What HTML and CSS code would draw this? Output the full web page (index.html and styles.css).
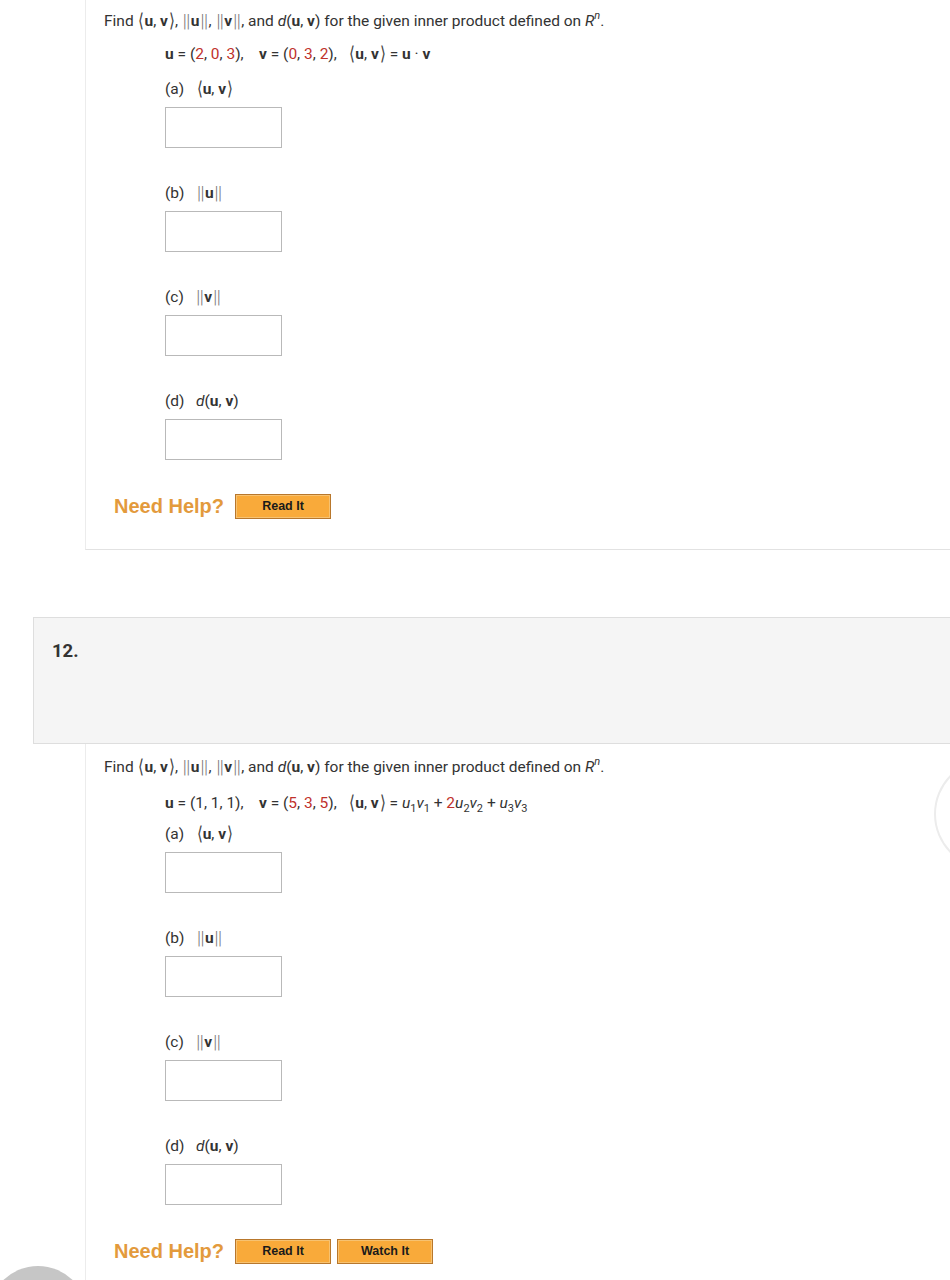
FILE: index.html
```html
<!DOCTYPE html>
<html>
<head>
<meta charset="utf-8">
<link rel="stylesheet" href="styles.css">
</head>
<body>
<div class="page">
  <section class="panel panel-first">
    <p class="intro">Find <span class="ip"><span class="br">⟨</span><b>u</b>, <b>v</b><span class="br">⟩</span></span>, <span class="nm"><span class="bar">||</span><b>u</b><span class="bar">||</span></span>, <span class="nm"><span class="bar">||</span><b>v</b><span class="bar">||</span></span>, and <i>d</i>(<b>u</b>, <b>v</b>) for the given inner product defined on <i>R</i><sup><i>n</i></sup>.</p>
    <p class="given"><b>u</b> = (<span class="red">2</span>, <span class="red">0</span>, <span class="red">3</span>), &nbsp;&nbsp; <b>v</b> = (<span class="red">0</span>, <span class="red">3</span>, <span class="red">2</span>), &nbsp;&nbsp;<span class="ip"><span class="br">⟨</span><b>u</b>, <b>v</b><span class="br">⟩</span></span> = <b>u</b> · <b>v</b></p>
    <div class="part"><div class="label">(a) &nbsp; <span class="ip"><span class="br">⟨</span><b>u</b>, <b>v</b><span class="br">⟩</span></span></div><div class="answer"></div></div>
    <div class="part"><div class="label">(b) &nbsp; <span class="nm"><span class="bar">||</span><b>u</b><span class="bar">||</span></span></div><div class="answer"></div></div>
    <div class="part"><div class="label">(c) &nbsp; <span class="nm"><span class="bar">||</span><b>v</b><span class="bar">||</span></span></div><div class="answer"></div></div>
    <div class="part"><div class="label">(d) &nbsp; <i>d</i>(<b>u</b>, <b>v</b>)</div><div class="answer"></div></div>
    <div class="help"><span class="help-text">Need Help?</span><span class="btn">Read It</span></div>
  </section>

  <div class="qhead"><span class="qnum">12.</span></div>

  <section class="panel panel-second">
    <p class="intro">Find <span class="ip"><span class="br">⟨</span><b>u</b>, <b>v</b><span class="br">⟩</span></span>, <span class="nm"><span class="bar">||</span><b>u</b><span class="bar">||</span></span>, <span class="nm"><span class="bar">||</span><b>v</b><span class="bar">||</span></span>, and <i>d</i>(<b>u</b>, <b>v</b>) for the given inner product defined on <i>R</i><sup><i>n</i></sup>.</p>
    <p class="given"><b>u</b> = (1, 1, 1), &nbsp;&nbsp; <b>v</b> = (<span class="red">5</span>, <span class="red">3</span>, <span class="red">5</span>), &nbsp;&nbsp;<span class="ip"><span class="br">⟨</span><b>u</b>, <b>v</b><span class="br">⟩</span></span> = <i>u</i><sub>1</sub><i>v</i><sub>1</sub> + <span class="red">2</span><i>u</i><sub>2</sub><i>v</i><sub>2</sub> + <i>u</i><sub>3</sub><i>v</i><sub>3</sub></p>
    <div class="part"><div class="label">(a) &nbsp; <span class="ip"><span class="br">⟨</span><b>u</b>, <b>v</b><span class="br">⟩</span></span></div><div class="answer"></div></div>
    <div class="part"><div class="label">(b) &nbsp; <span class="nm"><span class="bar">||</span><b>u</b><span class="bar">||</span></span></div><div class="answer"></div></div>
    <div class="part"><div class="label">(c) &nbsp; <span class="nm"><span class="bar">||</span><b>v</b><span class="bar">||</span></span></div><div class="answer"></div></div>
    <div class="part"><div class="label">(d) &nbsp; <i>d</i>(<b>u</b>, <b>v</b>)</div><div class="answer"></div></div>
    <div class="help"><span class="help-text">Need Help?</span><span class="btn">Read It</span><span class="btn">Watch It</span></div>
  </section>

  <div class="ring"></div>
  <div class="blob"></div>
</div>
</body>
</html>
```

FILE: styles.css
```css
html, body {
  margin: 0;
  padding: 0;
  background: #ffffff;
}
body {
  font-family: Roboto, "Liberation Sans", Arial, sans-serif;
  color: #333333;
  font-size: 15.5px;
  overflow: hidden;
  width: 950px;
  height: 1280px;
}
.page {
  position: relative;
  width: 950px;
  height: 1280px;
  overflow: hidden;
}
.panel {
  margin-left: 85px;
  border-left: 1px solid #ececec;
  padding-left: 18px;
}
.panel-first {
  padding-top: 11px;
  padding-bottom: 30px;
  border-bottom: 1px solid #e2e2e2;
}
.panel-second {
  padding-top: 13px;
  padding-bottom: 30px;
}
p {
  margin: 0;
}
.intro {
  line-height: 20px;
  height: 20px;
  white-space: nowrap;
}
.given {
  line-height: 20px;
  height: 20px;
  margin-left: 61px;
  margin-top: 13px;
  margin-bottom: 15px;
  white-space: nowrap;
}
.panel-second .given {
  margin-top: 16px;
  margin-bottom: 11px;
}
b {
  font-weight: 700;
}
.br {
  font-family: "DejaVu Sans", sans-serif;
  font-size: 19px;
  font-weight: 300;
  color: #444;
  display: inline-block;
  transform: scaleX(0.8);
  vertical-align: -1px;
  line-height: 0;
}
.bar {
  font-family: Roboto, sans-serif;
  font-size: 18px;
  font-weight: 300;
  color: #777;
  letter-spacing: -0.5px;
  display: inline-block;
  vertical-align: -1px;
  line-height: 0;
  margin: 0 1px;
}
sup {
  font-size: 11px;
  vertical-align: 7px;
  line-height: 0;
}
sub {
  font-size: 11px;
  vertical-align: -4px;
  line-height: 0;
}
.red {
  color: #c0312b;
}
.part {
  margin-left: 61px;
  margin-bottom: 35px;
}
.label {
  line-height: 20px;
  height: 20px;
  margin-bottom: 8px;
}
.answer {
  width: 115px;
  height: 39px;
  border: 1px solid #b9b9b9;
  background: #ffffff;
}
.help {
  display: flex;
  align-items: center;
  margin-left: 10px;
  margin-top: -2px;
  height: 26px;
}
.help-text {
  font-family: "Liberation Sans", Arial, sans-serif;
  font-weight: 700;
  font-size: 20px;
  color: #e39a3c;
  margin-right: 11px;
}
.btn {
  box-sizing: border-box;
  width: 96px;
  height: 25px;
  margin-right: 6px;
  border: 1px solid #b8772c;
  box-shadow: inset 0 0 0 1px #f7c271;
  background: #f9aa3a;
  font-family: "Liberation Sans", Arial, sans-serif;
  font-weight: 700;
  font-size: 12.5px;
  color: #1a1a1a;
  display: flex;
  align-items: center;
  justify-content: center;
}
.qhead {
  margin-top: 67px;
  margin-left: 33px;
  margin-right: -10px;
  height: 125px;
  background: #f5f5f5;
  border: 1px solid #dedede;
}
.qnum {
  display: block;
  margin-left: 18px;
  margin-top: 22px;
  font-family: Roboto, "Liberation Sans", sans-serif;
  font-weight: 700;
  font-size: 18.5px;
  color: #333;
}
.ring {
  position: absolute;
  left: 934px;
  top: 758px;
  width: 110px;
  height: 108px;
  border: 2px solid #ececec;
  border-radius: 50%;
}
.blob {
  position: absolute;
  left: -12px;
  top: 1266px;
  width: 100px;
  height: 100px;
  border-radius: 50%;
  background: #c6c6c6;
}
```
